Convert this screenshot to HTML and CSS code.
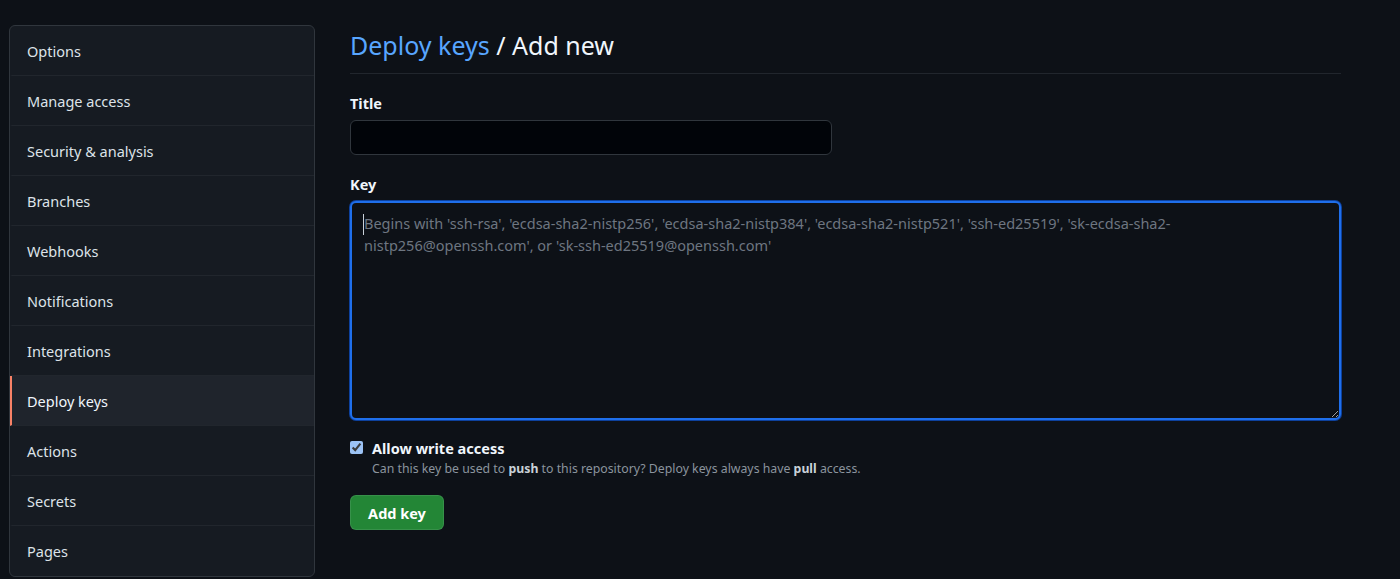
FILE: index.html
```html
<!DOCTYPE html>
<html lang="en">
<head>
<meta charset="utf-8">
<title>Deploy keys / Add new</title>
<link rel="stylesheet" href="styles.css">
</head>
<body>
<div class="layout">
  <nav class="menu">
    <a class="menu-item">Options</a>
    <a class="menu-item">Manage access</a>
    <a class="menu-item">Security &amp; analysis</a>
    <a class="menu-item">Branches</a>
    <a class="menu-item">Webhooks</a>
    <a class="menu-item">Notifications</a>
    <a class="menu-item">Integrations</a>
    <a class="menu-item selected">Deploy keys</a>
    <a class="menu-item">Actions</a>
    <a class="menu-item">Secrets</a>
    <a class="menu-item last">Pages</a>
  </nav>
  <main class="content">
    <div class="subhead">
      <h2 class="subhead-heading"><a class="crumb">Deploy keys</a> / Add new</h2>
    </div>
    <form class="form">
      <div class="form-group">
        <label class="form-label">Title</label>
        <input class="form-input title-input" type="text">
      </div>
      <div class="form-group">
        <label class="form-label">Key</label>
        <div class="key-wrap">
          <textarea class="form-input key-input" placeholder="Begins with 'ssh-rsa', 'ecdsa-sha2-nistp256', 'ecdsa-sha2-nistp384', 'ecdsa-sha2-nistp521', 'ssh-ed25519', 'sk-ecdsa-sha2-nistp256@openssh.com', or 'sk-ssh-ed25519@openssh.com'"></textarea>
          <span class="caret"></span>
        </div>
      </div>
      <div class="check-row">
        <input class="check" type="checkbox" checked>
        <div class="check-text">
          <label class="check-label">Allow write access</label>
          <p class="note">Can this key be used to <strong>push</strong> to this repository? Deploy keys always have <strong>pull</strong> access.</p>
        </div>
      </div>
      <button class="btn-primary" type="button">Add key</button>
    </form>
  </main>
</div>
</body>
</html>
```

FILE: styles.css
```css
* { box-sizing: border-box; }
html, body {
  margin: 0;
  background: #0d1117;
  color: #d5dbe1;
  font-family: "Noto Sans", "Open Sans", sans-serif;
}
.layout {
  display: flex;
  align-items: flex-start;
  padding: 25px 0 0 9px;
  gap: 35px;
}
.menu {
  width: 306px;
  flex: none;
  display: flex;
  flex-direction: column;
  background: #161b22;
  border: 1px solid #30363d;
  border-radius: 6px;
  overflow: hidden;
}
.menu-item {
  display: flex;
  align-items: center;
  height: 50px;
  padding-left: 15px;
  font-size: 14.5px;
  color: #dde3e9;
  border-bottom: 1px solid #21262d;
  border-left: 2px solid transparent;
}
.menu-item.last { border-bottom: none; }
.menu-item.selected {
  background: #1f242c;
  border-left-color: #f78166;
  color: #f0f6fc;
}
.content {
  width: 991px;
  flex: none;
}
.subhead {
  border-bottom: 1px solid #21262d;
  padding-bottom: 8px;
  margin-bottom: 19px;
}
.subhead-heading {
  margin: 0;
  font-size: 25px;
  font-weight: 400;
  line-height: 40px;
  color: #f0f6fc;
}
.crumb { color: #58a6ff; }
.form-group { margin-bottom: 19px; }
.form-label {
  display: block;
  font-size: 14.5px;
  font-weight: 700;
  color: #f0f6fc;
  line-height: 20px;
  margin-bottom: 7px;
}
.form-input {
  display: block;
  background: #010409;
  border: 1px solid #30363d;
  border-radius: 6px;
  color: #c9d1d9;
  font-family: inherit;
  font-size: 14.5px;
  outline: none;
}
.title-input {
  width: 482px;
  height: 35px;
}
.key-wrap { position: relative; }
.key-input {
  width: 991px;
  height: 219px;
  background: #0d1117;
  border: 2px solid #1f6feb;
  box-shadow: 0 0 0 1px #0d419d;
  padding: 9px 12px;
  line-height: 22px;
  resize: vertical;
}
.key-input::placeholder { color: #6e7681; opacity: 1; }
.caret {
  position: absolute;
  left: 13px;
  top: 13px;
  width: 1px;
  height: 21px;
  background: #c9d1d9;
}
.check-row {
  display: flex;
  align-items: flex-start;
  gap: 9px;
  margin-top: 20px;
}
.check {
  margin: 1px 0 0 0;
  width: 13px;
  height: 13px;
  accent-color: #9cc3f5;
}
.check-text { display: flex; flex-direction: column; }
.check-label {
  font-size: 14.5px;
  font-weight: 700;
  color: #f0f6fc;
  line-height: 17px;
}
.note {
  margin: 3px 0 0;
  font-size: 12.3px;
  color: #8b949e;
  line-height: 18px;
}
.note strong { color: #c9d1d9; }
.btn-primary {
  margin-top: 17px;
  width: 94px;
  height: 35px;
  background: #238636;
  border: 1px solid rgba(240,246,252,0.1);
  border-radius: 6px;
  color: #fff;
  font-family: inherit;
  font-size: 14.5px;
  font-weight: 700;
}
```
